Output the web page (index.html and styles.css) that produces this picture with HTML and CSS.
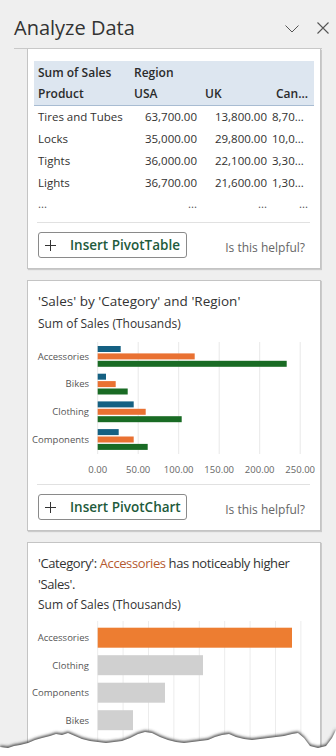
FILE: index.html
```html
<!DOCTYPE html>
<html lang="en">
<head>
    <meta charset="UTF-8">
    <meta name="viewport" content="width=device-width, initial-scale=1.0">
    <title>Analyze Data</title>
    <link rel="stylesheet" href="styles.css">
</head>
<body>
    <div class="header">
        <h1>Analyze Data</h1>
        <div class="header-icons">
            <svg class="icon-chevron" width="14" height="8" viewBox="0 0 14 8"><path d="M0.5 0.5 L7 7 L13.5 0.5" fill="none" stroke="#555" stroke-width="1"/></svg>
            <svg class="icon-close" width="12" height="12" viewBox="0 0 12 12"><path d="M0.5 0.5 L11.5 11.5 M11.5 0.5 L0.5 11.5" fill="none" stroke="#555" stroke-width="1.1"/></svg>
        </div>
    </div>

    <div class="panel">
        <!-- pivot table suggestion (scrolled, top cut off) -->
        <div class="card card-cut">
            <table class="pivot">
                <thead>
                    <tr><th>Sum of Sales</th><th>Region</th><th></th><th></th></tr>
                    <tr><th>Product</th><th>USA</th><th>UK</th><th>Can...</th></tr>
                </thead>
                <tbody>
                    <tr><td>Tires and Tubes</td><td class="num">63,700.00</td><td class="num">13,800.00</td><td class="cut">8,70...</td></tr>
                    <tr><td>Locks</td><td class="num">35,000.00</td><td class="num">29,800.00</td><td class="cut">10,0...</td></tr>
                    <tr><td>Tights</td><td class="num">36,000.00</td><td class="num">22,100.00</td><td class="cut">3,30...</td></tr>
                    <tr><td>Lights</td><td class="num">36,700.00</td><td class="num">21,600.00</td><td class="cut">1,30...</td></tr>
                    <tr class="more"><td>...</td><td class="num">...</td><td class="num">...</td><td class="num">...</td></tr>
                </tbody>
            </table>
            <div class="divider"></div>
            <div class="card-footer">
                <button class="insert-btn">
                    <svg width="11" height="11" viewBox="0 0 11 11"><path d="M5.5 0 V11 M0 5.5 H11" stroke="#333" stroke-width="1"/></svg>
                    Insert PivotTable
                </button>
                <span class="helpful">Is this helpful?</span>
            </div>
        </div>

        <!-- clustered bar chart -->
        <div class="card">
            <div class="card-title">'Sales' by 'Category' and 'Region'</div>
            <div class="card-sub">Sum of Sales (Thousands)</div>
            <svg class="chart" width="292" height="140" viewBox="0 0 292 140">
                <g stroke="#e8e8e8" stroke-width="1">
                    <line x1="69.7" y1="5" x2="69.7" y2="117"/>
                    <line x1="110.2" y1="5" x2="110.2" y2="117"/>
                    <line x1="150.7" y1="5" x2="150.7" y2="117"/>
                    <line x1="191.2" y1="5" x2="191.2" y2="117"/>
                    <line x1="231.7" y1="5" x2="231.7" y2="117"/>
                    <line x1="272.2" y1="5" x2="272.2" y2="117"/>
                </g>
                <g>
                    <rect x="69.7" y="9" width="23" height="6" fill="#156082"/>
                    <rect x="69.7" y="16.4" width="97" height="6" fill="#e97132"/>
                    <rect x="69.7" y="23.8" width="189" height="6" fill="#196b24"/>

                    <rect x="69.7" y="36.7" width="8.3" height="6" fill="#156082"/>
                    <rect x="69.7" y="44.1" width="18" height="6" fill="#e97132"/>
                    <rect x="69.7" y="51.5" width="30" height="6" fill="#196b24"/>

                    <rect x="69.7" y="64.4" width="36" height="6" fill="#156082"/>
                    <rect x="69.7" y="71.8" width="48" height="6" fill="#e97132"/>
                    <rect x="69.7" y="79.2" width="84" height="6" fill="#196b24"/>

                    <rect x="69.7" y="92.1" width="21" height="6" fill="#156082"/>
                    <rect x="69.7" y="99.5" width="36" height="6" fill="#e97132"/>
                    <rect x="69.7" y="106.9" width="50" height="6" fill="#196b24"/>
                </g>
                <g class="cat-label" text-anchor="end">
                    <text x="61" y="22.5">Accessories</text>
                    <text x="61" y="50.2">Bikes</text>
                    <text x="61" y="77.9">Clothing</text>
                    <text x="61" y="105.6">Components</text>
                </g>
                <g class="axis-label" text-anchor="middle">
                    <text x="69.7" y="135.5">0.00</text>
                    <text x="110.2" y="135.5">50.00</text>
                    <text x="150.7" y="135.5">100.00</text>
                    <text x="191.2" y="135.5">150.00</text>
                    <text x="231.7" y="135.5">200.00</text>
                    <text x="272.2" y="135.5">250.00</text>
                </g>
            </svg>
            <div class="divider"></div>
            <div class="card-footer">
                <button class="insert-btn">
                    <svg width="11" height="11" viewBox="0 0 11 11"><path d="M5.5 0 V11 M0 5.5 H11" stroke="#333" stroke-width="1"/></svg>
                    Insert PivotChart
                </button>
                <span class="helpful">Is this helpful?</span>
            </div>
        </div>

        <!-- outstanding category -->
        <div class="card">
            <div class="card-title long">'Category': <span class="highlight">Accessories</span> has noticeably higher 'Sales'.</div>
            <div class="card-sub tight">Sum of Sales (Thousands)</div>
            <svg class="chart" width="292" height="130" viewBox="0 0 292 130">
                <g stroke="#ececec" stroke-width="1">
                    <line x1="69.7" y1="3" x2="69.7" y2="125"/>
                    <line x1="95.1" y1="3" x2="95.1" y2="125"/>
                    <line x1="120.5" y1="3" x2="120.5" y2="125"/>
                    <line x1="145.9" y1="3" x2="145.9" y2="125"/>
                    <line x1="171.3" y1="3" x2="171.3" y2="125"/>
                    <line x1="196.7" y1="3" x2="196.7" y2="125"/>
                    <line x1="222.1" y1="3" x2="222.1" y2="125"/>
                    <line x1="247.5" y1="3" x2="247.5" y2="125"/>
                    <line x1="272.9" y1="3" x2="272.9" y2="125"/>
                </g>
                <rect x="69.7" y="9.7" width="194.3" height="20" fill="#ed7d31"/>
                <rect x="69.7" y="37.2" width="105.3" height="20" fill="#d0d0d0"/>
                <rect x="69.7" y="64.7" width="67.3" height="20" fill="#d0d0d0"/>
                <rect x="69.7" y="92.2" width="35.3" height="20" fill="#d0d0d0"/>
                <g class="cat-label" text-anchor="end">
                    <text x="61" y="23.2">Accessories</text>
                    <text x="61" y="50.7">Clothing</text>
                    <text x="61" y="78.2">Components</text>
                    <text x="61" y="105.7">Bikes</text>
                </g>
            </svg>
        </div>
    </div>

    <svg class="tear" width="336" height="30" viewBox="0 0 336 30">
        <defs>
            <filter id="tearShadow" x="-5%" y="-50%" width="110%" height="200%">
                <feGaussianBlur stdDeviation="1.4"/>
            </filter>
        </defs>
        <path filter="url(#tearShadow)" fill="#444" transform="translate(0,-1.5)"
              d="M0 21 L8 22 L14 20 L20 19 L28 17 L35 14 L42 12 L50 10 L56 8 L62 9 L68 7 L75 10 L82 13 L90 15 L98 16 L106 17 L114 16 L122 15 L130 12 L138 8 L145 6 L152 7 L160 11 L168 14 L176 16 L184 17 L192 16 L200 15 L208 14 L215 11 L222 9 L229 8 L236 11 L244 13 L252 14 L260 13 L268 12 L276 11 L284 10 L292 8 L298 7 L304 12 L310 20 L318 22 L326 20 L332 12 L336 4 L336 30 L0 30 Z"/>
        <path fill="#fff"
              d="M0 21 L8 22 L14 20 L20 19 L28 17 L35 14 L42 12 L50 10 L56 8 L62 9 L68 7 L75 10 L82 13 L90 15 L98 16 L106 17 L114 16 L122 15 L130 12 L138 8 L145 6 L152 7 L160 11 L168 14 L176 16 L184 17 L192 16 L200 15 L208 14 L215 11 L222 9 L229 8 L236 11 L244 13 L252 14 L260 13 L268 12 L276 11 L284 10 L292 8 L298 7 L304 12 L310 20 L318 22 L326 20 L332 12 L336 4 L336 30 L0 30 Z"/>
    </svg>
</body>
</html>
```

FILE: styles.css
```css
:root {
    --bg: #efefef;
    --card-border: #c4c4c4;
    --text: #323130;
    --text-muted: #666666;
    --green: #1e5b3c;
}

* {
    box-sizing: border-box;
    margin: 0;
    padding: 0;
}

body {
    font-family: "Open Sans", "Noto Sans", sans-serif;
    background-color: var(--bg);
    color: var(--text);
    width: 336px;
    height: 756px;
    overflow: hidden;
    position: relative;
}

.header {
    height: 48px;
    display: flex;
    align-items: center;
    justify-content: space-between;
    padding: 7px 0 0 14px;
}

.header h1 {
    font-size: 20px;
    font-weight: 400;
    color: #333;
}

.header-icons {
    display: flex;
    align-items: center;
    gap: 18px;
    padding-right: 7px;
}

.icon-chevron {
    margin-top: 2px;
}

.panel {
    margin-left: 14px;
    width: 308px;
    height: 708px;
    border-top: 1px solid #c8c8c8;
    overflow: hidden;
}

.card {
    margin: 11px 0 0 13px;
    width: 294px;
    background-color: #fff;
    border: 1px solid var(--card-border);
    box-shadow: 1px 1px 1px rgba(0, 0, 0, 0.15);
    padding: 10px 10px 10px;
}

.card-cut {
    margin-top: 0;
    border-top: none;
    padding-top: 12px;
}

/* pivot table */
.pivot {
    width: 280px;
    margin: 0 -4px;
    border-collapse: collapse;
    table-layout: fixed;
    font-size: 11.5px;
    white-space: nowrap;
}

.pivot th,
.pivot td {
    height: 22px;
    padding: 0;
    overflow: hidden;
}

.pivot th:nth-child(1), .pivot td:nth-child(1) { width: 94px; padding-left: 4px; }
.pivot th:nth-child(2), .pivot td:nth-child(2) { width: 72px; }
.pivot th:nth-child(3), .pivot td:nth-child(3) { width: 70px; }
.pivot th:nth-child(4), .pivot td:nth-child(4) { width: 44px; }

.pivot thead {
    background-color: #dde6f0;
}

.pivot th {
    text-align: left;
    font-weight: 600;
    font-size: 12px;
    color: #2b2b2b;
}

.pivot thead th:nth-child(2) { padding-left: 6px; }
.pivot thead th:nth-child(3) { padding-left: 5px; }
.pivot thead th:nth-child(4) { padding-left: 6px; }

.pivot thead tr:last-child th {
    border-bottom: 1px solid #a8bcd2;
}

.pivot td.num {
    text-align: right;
    padding-right: 3px;
}

.pivot td.cut {
    padding-left: 2px;
}

.pivot tr.more td {
    color: #555;
    padding-bottom: 2px;
}

.pivot tr.more td:last-child {
    padding-right: 6px;
}

.divider {
    height: 1px;
    background-color: #e1e1e1;
    margin: 7px 0 0 -1px;
}

.card-footer {
    display: flex;
    align-items: center;
    justify-content: space-between;
    margin-top: 9px;
    padding-right: 5px;
}

.insert-btn {
    width: 149px;
    height: 26px;
    display: flex;
    align-items: center;
    gap: 14px;
    padding-left: 6px;
    background-color: #fff;
    border: 1px solid #8a8a8a;
    border-radius: 3px;
    font-family: inherit;
    font-size: 13.5px;
    font-weight: 600;
    color: var(--green);
    cursor: pointer;
}

.helpful {
    font-size: 12px;
    color: var(--text-muted);
    margin-top: 4px;
}

.card-title {
    font-size: 13.5px;
    line-height: 21px;
    color: #333;
}

.card-title.long {
    font-size: 13px;
    letter-spacing: -0.4px;
    margin-right: -6px;
}

.highlight {
    color: #b55a30;
}

.card-sub {
    font-size: 12px;
    line-height: 18px;
    margin-top: 3px;
    color: #333;
}

.card-sub.tight {
    margin-top: 1px;
}

.chart {
    display: block;
    margin: 4px -10px 0;
}

.cat-label text {
    font-size: 9.5px;
    fill: #555;
    font-family: "Open Sans", sans-serif;
}

.axis-label text {
    font-size: 9.5px;
    fill: #666;
    font-family: "Open Sans", sans-serif;
}

.tear {
    position: absolute;
    left: 0;
    bottom: 0;
}
```
